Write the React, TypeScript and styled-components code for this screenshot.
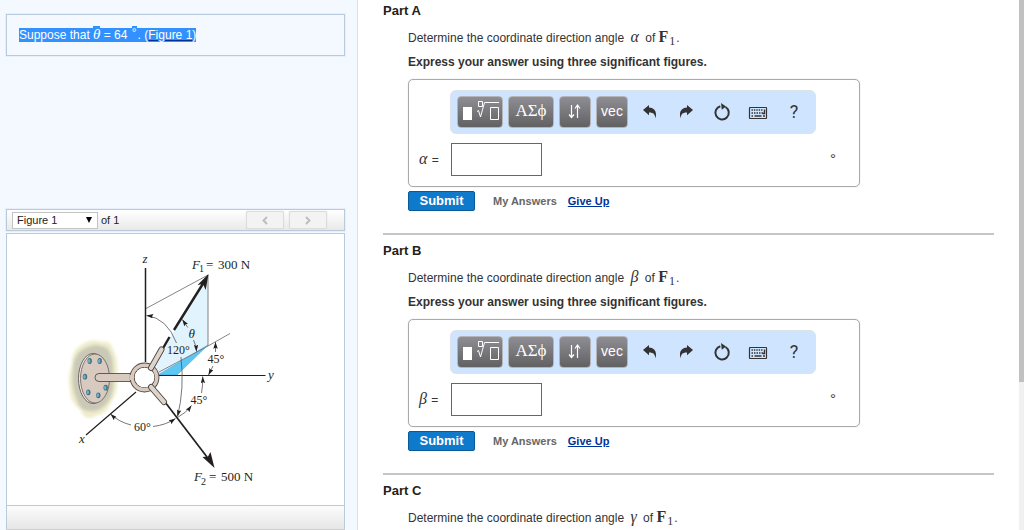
import React from "react";
import styled, { createGlobalStyle } from "styled-components";

const sans = `"Liberation Sans", Arial, sans-serif`;
const serif = `"Liberation Serif", "Times New Roman", serif`;

const GlobalStyle = createGlobalStyle`
  * { box-sizing: border-box; }
  body { margin: 0; overflow: hidden; background: #fff; color: #333; font: 12px/16px ${sans}; }
  p, h2 { margin: 0; }
`;

const Page = styled.div`
  display: grid;
  grid-template-columns: 358px minmax(0, 1fr) 5px;
  height: 100vh;
  overflow: hidden;
`;

/* ---------- left column ---------- */

const Side = styled.aside`
  display: flex;
  flex-direction: column;
  padding: 14px 12px 0 6px;
  background: #f4f8ff;
  border-right: 1px solid #d5e1f0;
`;

const Problem = styled.section`
  padding: 12px;
  border: 1px solid #b9cadd;
  box-shadow: 0 0 0 1px #e6effa;
`;

const Selected = styled.span`
  background: #3390ff;
  color: #fff;
`;

const Theta = styled.i`
  background: #3390ff;
  font: italic 15px/1px ${serif};
`;

const Degree = styled.sup`
  margin: 0 1px;
  background: #3390ff;
  font-size: 12px;
  line-height: 1px;
  vertical-align: 2px;
`;

const FigureLink = styled.a`
  color: #fff;
  text-decoration: underline #003399;
`;

const Viewer = styled.section`
  margin-top: auto;
`;

const FigureBar = styled.div`
  display: flex;
  align-items: center;
  height: 22px;
  padding: 0 17px 0 5px;
  border: 1px solid #b9cadd;
  background: linear-gradient(#fff, #e9e9e9);
  box-shadow: 0 0 0 1px #e6effa;
  color: #222;
  font-size: 11px;
`;

const SelectBox = styled.label`
  position: relative;
  display: flex;
  margin-right: 3px;
`;

const Select = styled.select`
  appearance: none;
  width: 86px;
  height: 17px;
  padding: 0 4px;
  border: 1px solid #c4c4c4;
  border-radius: 0;
  background: #fff;
  color: #222;
  font: 11px/15px ${sans};
`;

const SelectArrow = styled.svg`
  position: absolute;
  right: 6px;
  top: 5px;
  pointer-events: none;
`;

const Pager = styled.div`
  display: flex;
  gap: 5px;
  margin-left: auto;
`;

const PageButton = styled.button`
  display: grid;
  place-items: center;
  width: 38px;
  height: 18px;
  padding: 0;
  border: 1px solid #dcdcdc;
  border-radius: 2px;
  background: #f3f3f3;
  box-shadow: 0 0 1px #ccc;
`;

const FigureBox = styled.div`
  height: 272px;
  margin-top: 2px;
  padding: 6px 0 0 53px;
  border: 1px solid #b9cadd;
  border-bottom: 0;
  background: #fff;
`;

const FigureFooter = styled.div`
  height: 25px;
  border: 1px solid #b9cadd;
  border-bottom-color: #d0d0d0;
  background: linear-gradient(#fcfcfc, #e6e6e6);
`;

/* ---------- right column ---------- */

const Main = styled.main`
  padding: 3px 25px 0;
  overflow: hidden;
`;

const PartBlock = styled.section`
  & + & {
    margin-top: 22px;
    padding-top: 8px;
    border-top: 2px solid #c6c6c6;
  }
`;

const Title = styled.h2`
  color: #222;
  font: bold 13px/16px ${sans};
`;

const Body = styled.div`
  padding-left: 25px;
`;

const Question = styled.p`
  margin-top: 11px;
`;

const Instruction = styled.p`
  margin-top: 8px;
  font-weight: bold;
`;

const Symbol = styled.i`
  margin-right: 1px;
  font: italic 16px/1px ${serif};

  ${Question} & {
    margin: 0 3px;
  }
`;

const Vector = styled.b`
  font: bold 16px/1px ${serif};
`;

const Sub = styled.sub`
  margin: 0 1px;
  font: 12px/1px ${serif};
`;

const AnswerBox = styled.div`
  display: grid;
  grid-template-columns: 31px auto 43px;
  row-gap: 9px;
  width: fit-content;
  margin-top: 9px;
  padding: 10px 0 10px 10px;
  border: 1px solid #a9a9a9;
  border-radius: 5px;
  box-shadow: 0 0 1px #bbb;
`;

const Toolbar = styled.div`
  grid-column: 2;
  display: flex;
  align-items: center;
  gap: 5px;
  height: 44px;
  padding: 0 3px 0 6px;
  border: 1px solid #dde3ea;
  border-radius: 6px;
  background: #cfe5ff;
`;

const ToolButton = styled.button<{ $wide?: boolean; $serif?: boolean }>`
  display: grid;
  place-items: center;
  width: ${(p) => (p.$wide ? 46 : 32)}px;
  height: 32px;
  padding: 0 0 2px;
  border: 1px solid #b5b5b8;
  border-radius: 4px;
  background: linear-gradient(#8f8e94, #616163);
  color: #fff;
  font: ${(p) => (p.$serif ? `17px/20px ${serif}` : `14px/20px ${sans}`)};
`;

const IconRow = styled.div`
  display: flex;
  margin-left: -1px;
`;

const IconButton = styled.button`
  display: grid;
  place-items: center;
  width: 36px;
  height: 32px;
  padding: 0;
  border: 0;
  background: none;
  color: #333;
  font: 18px/20px Roboto, ${sans};
`;

const FieldLabel = styled.label`
  align-self: center;
  white-space: nowrap;
`;

const Field = styled.input`
  width: 91px;
  height: 33px;
  margin-left: 1px;
  padding: 4px;
  border: 1px solid #3a6bc8;
  outline: 0;
  background: #fff;
  font: 14px/20px ${sans};
`;

const Unit = styled.span`
  padding: 8px 0 0 14px;
  font-size: 15px;
`;

const Actions = styled.div`
  display: flex;
  align-items: center;
  gap: 11px;
  margin-top: 4px;
  font: bold 11px/16px ${sans};
`;

const Submit = styled.button`
  width: 67px;
  height: 20px;
  margin-right: 7px;
  padding: 0;
  border: 1px solid #0b5a98;
  border-radius: 2px;
  background: #0f79cc;
  color: #fff;
  font: bold 13px/16px ${sans};
`;

const Muted = styled.span`
  color: #666;
`;

const GiveUp = styled.a`
  color: #003399;
`;

const Track = styled.div`
  height: 100%;
  background: #f1f1f1;
`;

const Thumb = styled.div`
  height: 72%;
  background: #c1c1c1;
`;

/* ---------- drawings ---------- */

function TemplateIcon() {
  return (
    <svg width="38" height="22" viewBox="461 101 38 22" fill="none" stroke="#fff">
      <path d="M463 108h9v13h-9z" fill="#fff" stroke="none" />
      <path d="M478.500 102.500h4v5h-4zM490.500 108.500h8v12h-8z" />
      <path d="M477 112.500l1.500-1 2 6.500 4-14.500h14.500" />
    </svg>
  );
}

function ArrowsIcon() {
  return (
    <svg width="14" height="16" viewBox="0 0 14 16" fill="none" stroke="#fff" strokeWidth="1.200">
      <path d="M3.500 2v12.500M1 11.500l2.500 3 2.500-3M9.500 15V2.500M7 5.500l2.500-3.500 2.500 3.500" />
    </svg>
  );
}

function BackIcon({ forward = false }: { forward?: boolean }) {
  return (
    <svg width="14" height="14" viewBox="0 0 14 14" fill="#333">
      <g transform={forward ? "matrix(-1 0 0 1 14 0)" : undefined}>
        <path d="M0 5L6 0v2.600C11.500 2.800 14.500 7 12.300 13.500 12.300 9.500 10.500 7.400 6 7.500v2.700z" />
      </g>
    </svg>
  );
}

function ResetIcon() {
  return (
    <svg width="18" height="18" viewBox="0 0 18 18">
      <path d="M12.500 4A6.700 6.700 0 1 1 7.300 3.300" fill="none" stroke="#333" strokeWidth="2" />
      <path d="M8 0l5 3.400-4.200 3.400z" fill="#333" />
    </svg>
  );
}

function KeyboardIcon() {
  return (
    <svg width="20" height="16" viewBox="0 0 20 16" fill="none" stroke="#333">
      <rect x="1.500" y="3.500" width="17" height="11" rx="0.500" strokeWidth="1.200" />
      <path d="M3.500 6h12" strokeDasharray="1.400 1" strokeWidth="1.400" />
      <path d="M3.500 9h11.500" strokeDasharray="1.500 1" strokeWidth="1.400" />
      <path d="M3.500 12h1.500M6.500 12h7M15 12h2M16.500 5.500v4h-2" strokeWidth="1.400" />
    </svg>
  );
}

function Chevron({ right = false }: { right?: boolean }) {
  return (
    <svg width="8" height="9" viewBox="0 0 8 9" fill="none" stroke="#bbb" strokeWidth="1.800">
      <path d={right ? "M2 1l3.500 3.500L2 8" : "M6 1L2.500 4.500 6 8"} />
    </svg>
  );
}

const bolts = [[89.7, 361], [99.7, 361], [85, 376.7], [88.3, 392.3], [98.3, 395.3], [105.7, 387.7]];

function ForceDiagram() {
  return (
    <svg width="230" height="260" viewBox="60 240 230 260" role="img" aria-label="Eyebolt loaded by forces F1 and F2" fontFamily={serif} fill="#231f20">
      <defs>
        <filter id="haze" x="-30%" y="-30%" width="160%" height="160%">
          <feGaussianBlur stdDeviation="1.800" />
        </filter>
        <marker id="tip" viewBox="0 0 6 4" refX="6" refY="2" markerWidth="7" markerHeight="4.500" markerUnits="userSpaceOnUse" orient="auto-start-reverse">
          <path d="M0 0L6 2 0 4l1-2z" fill="#231f20" />
        </marker>
      </defs>

      {/* wall, plate and bolts */}
      <path filter="url(#haze)" fill="#eeecca" d="M83 344Q92 338 102 342 110 340 113 349 119 362 117 375 119 392 111 402 106 415 95 416 85 422 80 409 70 403 70 390 67 375 72 365 71 350 83 344z" />
      <path filter="url(#haze)" fill="#cac9b8" d="M84 349Q95 342 107 348 114 356 113 374 115 392 108 402 99 413 89 411 79 410 77 400 71 387 73 371 73 354 84 349z" />
      <ellipse cx="93" cy="378.500" rx="14.500" ry="25" fill="#f1e9e3" stroke="#554d49" strokeWidth="0.800" />
      <ellipse cx="95" cy="378.500" rx="14.500" ry="24.500" fill="#d9cabf" stroke="#554d49" strokeWidth="0.700" />
      {bolts.map(([x, y]) => (
        <g key={`${x}-${y}`}>
          <ellipse cx={x} cy={y} rx="2.200" ry="2.900" fill="#4a6e7d" />
          <ellipse cx={x - 0.5} cy={y} rx="1.200" ry="2" fill="#66b5d4" />
        </g>
      ))}

      {/* planes */}
      <path fill="#e1f3fd" d="M208 275v71l-49 28-3-8 8-18z" />
      <path fill="#5cc7f5" stroke="#3b9cc8" strokeWidth="0.500" d="M158 375l50-30-31 30z" />

      {/* axes and projection lines */}
      <g fill="none" stroke="#777" strokeWidth="0.900">
        <path d="M146 308.500L208 275v71M159 372l49-26 22-12.500" />
      </g>
      <g fill="none" stroke="#231f20" strokeWidth="1.200">
        <path d="M145.500 268v94" strokeWidth="1.500" />
        <path d="M158 375.500h107.500M136 392l-50 43" />
      </g>

      {/* angle arcs */}
      <g fill="none" stroke="#555" strokeWidth="0.800">
        <path markerStart="url(#tip)" d="M146.500 315.500Q167 318 176.500 343" />
        <path markerEnd="url(#tip)" d="M181 357Q184.500 389 177.500 416.500" />
        <path markerStart="url(#tip)" d="M182.300 319.500l5.500 8" />
        <path markerEnd="url(#tip)" d="M193.500 340Q196 345 196.500 351.500" />
        <path markerStart="url(#tip)" d="M215.500 342v10" />
        <path markerEnd="url(#tip)" d="M213 366l-4.500 9" />
        <path markerStart="url(#tip)" d="M202.700 376.500Q203 385 201.500 393" />
        <path markerStart="url(#tip)" d="M191.500 405.500Q186 413 177.500 417.500" />
        <path markerStart="url(#tip)" d="M110.500 414Q119 422 131 425" />
        <path markerEnd="url(#tip)" d="M153 426.500Q166 425 175.500 418.500" />
      </g>

      {/* rod and ring */}
      <path fill="#d9cabf" stroke="#554d49" strokeWidth="0.900" d="M132 373.500H99q-4 0-4 4t4 4h33" />
      <circle cx="144.500" cy="377.500" r="12.300" fill="none" stroke="#4c4542" strokeWidth="5.200" />
      <circle cx="144.500" cy="377.500" r="12.300" fill="none" stroke="#d9cabf" strokeWidth="3.400" />
      <circle cx="144.500" cy="377.500" r="9.800" fill="#fff" />
      <path fill="none" stroke="#d9cabf" strokeWidth="5" d="M129.500 377.500h4" />

      {/* forces */}
      <path stroke="#231f20" strokeWidth="2.400" d="M162 350l7.500-13M174 330l30-48" />
      <path d="M208.500 274l-11 11 5.500-1 2.700 6z" />
      <path stroke="#231f20" strokeWidth="1.700" d="M165 402l42 55" />
      <path d="M214.500 468l-12-11 5.500-.5 2.500-4.500z" />
      <g strokeLinecap="round">
        <path stroke="#4c4542" strokeWidth="6" d="M151 368l10.500-18.500M151 387l13 15" />
        <path stroke="#ddd5cb" strokeWidth="4.200" d="M151 368l10.500-18.500M151 387l13 15" />
      </g>

      {/* labels */}
      <g fontSize="13" fontStyle="italic">
        <text x="142.500" y="263">z</text>
        <text x="268" y="379">y</text>
        <text x="79" y="443">x</text>
        <text x="192" y="269">F</text>
        <text x="194" y="481">F</text>
        <text x="188.500" y="338">θ</text>
      </g>
      <g fontSize="10">
        <text x="199" y="272">1</text>
        <text x="201" y="485">2</text>
      </g>
      <g fontSize="13">
        <text x="206" y="269">=</text>
        <text x="218" y="269">300 N</text>
        <text x="209" y="481">=</text>
        <text x="221" y="481">500 N</text>
      </g>
      <g fontSize="12">
        <text x="167" y="354">120°</text>
        <text x="207.500" y="363">45°</text>
        <text x="190.500" y="404">45°</text>
        <text x="134" y="431">60°</text>
      </g>
    </svg>
  );
}

/* ---------- page ---------- */

function Part({ letter, symbol, answer = true }: { letter: string; symbol: string; answer?: boolean }) {
  const id = `answer-${letter}`;
  return (
    <PartBlock>
      <Title>Part {letter}</Title>
      <Body>
        <Question>
          Determine the coordinate direction angle <Symbol>{symbol}</Symbol> of <Vector>F</Vector>
          <Sub>1</Sub>.
        </Question>
        {answer && (
          <>
            <Instruction>Express your answer using three significant figures.</Instruction>
            <AnswerBox>
              <Toolbar role="toolbar" aria-label="Math tools">
                <ToolButton $wide aria-label="Templates"><TemplateIcon /></ToolButton>
                <ToolButton $wide $serif>ΑΣϕ</ToolButton>
                <ToolButton aria-label="Arrows"><ArrowsIcon /></ToolButton>
                <ToolButton>vec</ToolButton>
                <IconRow>
                  <IconButton aria-label="Undo"><BackIcon /></IconButton>
                  <IconButton aria-label="Redo"><BackIcon forward /></IconButton>
                  <IconButton aria-label="Reset"><ResetIcon /></IconButton>
                  <IconButton aria-label="Keyboard shortcuts"><KeyboardIcon /></IconButton>
                  <IconButton>?</IconButton>
                </IconRow>
              </Toolbar>
              <span />
              <FieldLabel htmlFor={id}><Symbol>{symbol}</Symbol> =</FieldLabel>
              <Field id={id} type="text" />
              <Unit>°</Unit>
            </AnswerBox>
            <Actions>
              <Submit>Submit</Submit>
              <Muted>My Answers</Muted>
              <GiveUp href="#give-up">Give Up</GiveUp>
            </Actions>
          </>
        )}
      </Body>
    </PartBlock>
  );
}

export default function App() {
  return (
    <>
      <GlobalStyle />
      <Page>
        <Side>
          <Problem>
            <Selected>
              Suppose that <Theta>θ</Theta> = 64 <Degree>°</Degree>. (<FigureLink href="#figure">Figure 1</FigureLink>)
            </Selected>
          </Problem>
          <Viewer id="figure">
            <FigureBar>
              <SelectBox>
                <Select aria-label="Figure">
                  <option>Figure 1</option>
                </Select>
                <SelectArrow width="6" height="6" viewBox="0 0 6 6">
                  <path d="M0 0h6L3 6z" />
                </SelectArrow>
              </SelectBox>
              of 1
              <Pager>
                <PageButton aria-label="Previous figure"><Chevron /></PageButton>
                <PageButton aria-label="Next figure"><Chevron right /></PageButton>
              </Pager>
            </FigureBar>
            <FigureBox><ForceDiagram /></FigureBox>
            <FigureFooter />
          </Viewer>
        </Side>
        <Main>
          <Part letter="A" symbol="α" />
          <Part letter="B" symbol="β" />
          <Part letter="C" symbol="γ" answer={false} />
        </Main>
        <Track aria-hidden="true"><Thumb /></Track>
      </Page>
    </>
  );
}
